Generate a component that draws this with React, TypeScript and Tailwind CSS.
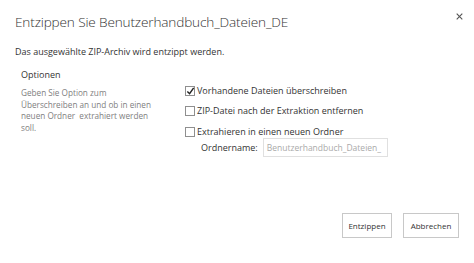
import React from 'react';

const font = { fontFamily: '"Open Sans", "Noto Sans", sans-serif' };

const Box: React.FC<{ checked?: boolean }> = ({ checked }) => (
  <span className="relative inline-block w-[10px] h-[10px] border border-[#8f8f8f] bg-white shrink-0">
    {checked && (
      <svg viewBox="0 0 10 10" className="absolute left-[0px] top-[-1px] w-[9px] h-[10px]">
        <path d="M1.5 5.5 L4 8 L8.5 1.5" fill="none" stroke="#222" strokeWidth="1.6" />
      </svg>
    )}
  </span>
);

export default function App() {
  return (
    <div className="w-[474px] h-[263px] bg-white text-[#333] flex flex-col" style={font}>
      <div className="flex items-start justify-between pl-[15px] pr-[11px] pt-[12px]">
        <h1 className="text-[13.6px] font-light leading-[20px] text-[#333] tracking-[-0.15px]">
          Entzippen Sie Benutzerhandbuch_Dateien_DE
        </h1>
        <svg viewBox="0 0 10 10" className="w-[7px] h-[7px] mt-[1px]">
          <path d="M1 1 L9 9 M9 1 L1 9" stroke="#555" strokeWidth="1.6" />
        </svg>
      </div>
      <p className="pl-[15px] mt-[13px] text-[9px] leading-[14px] text-[#333]">
        Das ausgewählte ZIP-Archiv wird entzippt werden.
      </p>
      <div className="flex pl-[21px] mt-[9px]">
        <div className="w-[164px]">
          <div className="text-[9px] leading-[14px] text-[#333]">Optionen</div>
          <p className="mt-[5px] text-[8.2px] leading-[11.5px] text-[#808080] whitespace-nowrap">
            Geben Sie Option zum
            <br />
            Überschreiben an und ob in einen
            <br />
            neuen Ordner&nbsp; extrahiert werden
            <br />
            soll.
          </p>
        </div>
        <div className="flex flex-col mt-[16px] text-[9px] leading-[14px] text-[#333]">
          <label className="flex items-center gap-[2px]">
            <Box checked />
            <span>Vorhandene Dateien überschreiben</span>
          </label>
          <label className="flex items-center gap-[2px] mt-[6px]">
            <Box />
            <span>ZIP-Datei nach der Extraktion entfernen</span>
          </label>
          <label className="flex items-center gap-[2px] mt-[7px]">
            <Box />
            <span>Extrahieren in einen neuen Ordner</span>
          </label>
          <div className="flex items-center pl-[16px] mt-[-1px]">
            <span>Ordnername:</span>
            <div className="ml-[5px] w-[125px] h-[19px] border border-[#e0e0e0] px-[3px] text-[8.5px] leading-[17px] text-[#aaa] overflow-hidden whitespace-nowrap">
              Benutzerhandbuch_Dateien_
            </div>
          </div>
        </div>
      </div>
      <div className="mt-auto mb-[25px] pr-[15px] flex justify-end gap-[11px]">
        <button className="w-[50px] h-[25px] border border-[#c8c8c8] text-[8px] text-[#333]">Entzippen</button>
        <button className="w-[56px] h-[25px] border border-[#c8c8c8] text-[8px] text-[#333]">Abbrechen</button>
      </div>
    </div>
  );
}
